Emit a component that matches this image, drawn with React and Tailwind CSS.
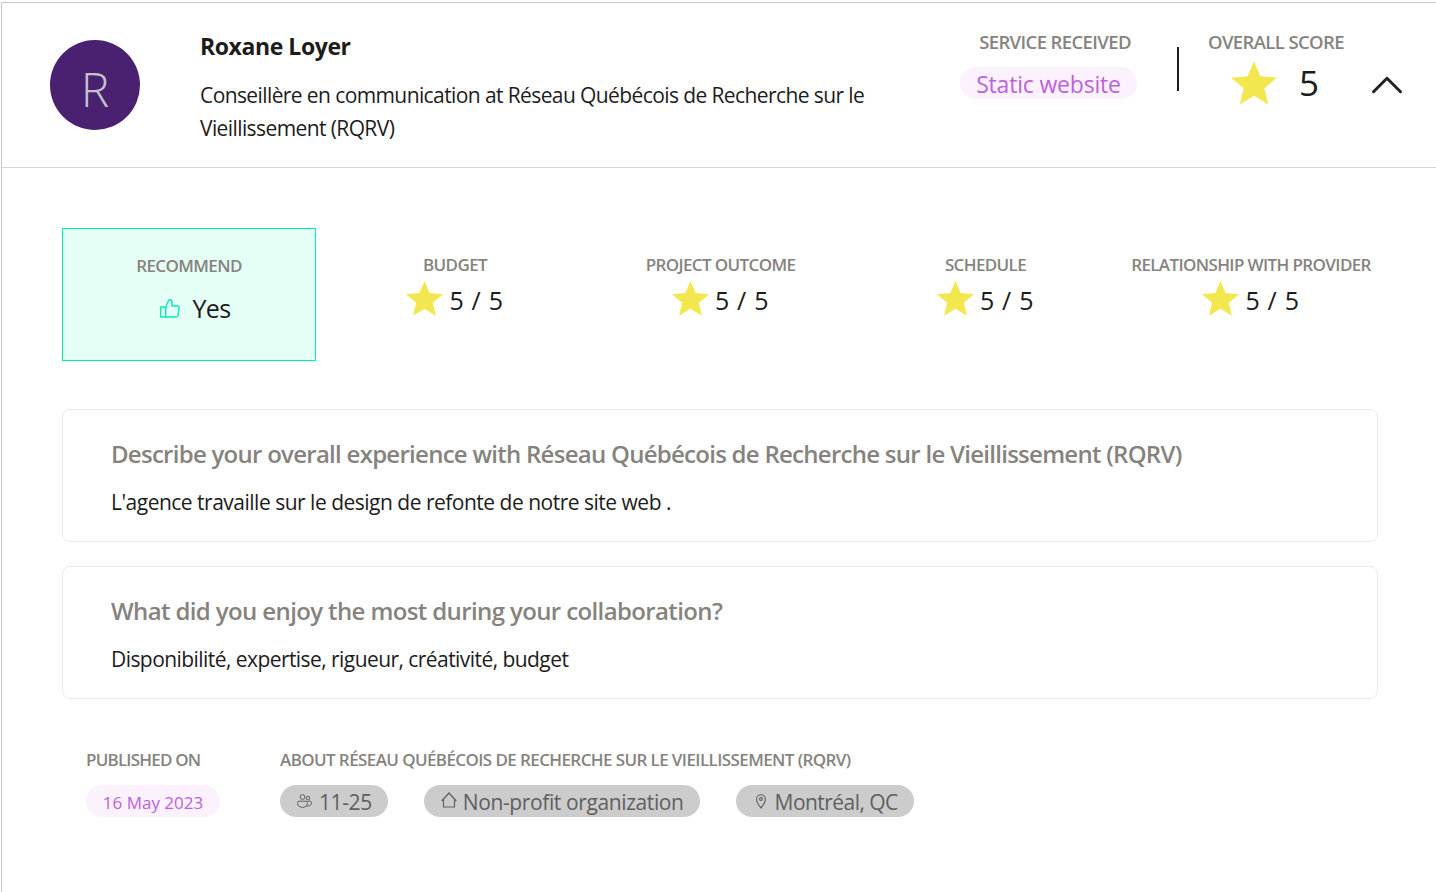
import React from "react";
import { ChevronUp } from "lucide-react";

const Star = ({ className }) => (
  <svg viewBox="0 0 24 24" className={className}>
    <path
      fill="#f2e74e"
      d="M12 .6l3.300 7.900 8.700.7-6.600 5.600 2 8.400L12 18.700l-7.400 4.500 2-8.400L0 9.200l8.700-.7z"
    />
  </svg>
);

const ThumbIcon = () => (
  <svg viewBox="0 0 20 19" className="w-[20px] h-[19px]" fill="none" stroke="#00f0b0" strokeWidth="1.4" strokeLinejoin="round">
    <rect x=".7" y="8" width="5" height="10" />
    <path d="M5.700 8L8.500 1.500Q9 .7 10 .7 12 .7 12 3V7H18Q19.300 7 19.100 8.500L18 16.500Q17.800 18 16.500 18H5.700" />
  </svg>
);

const UsersIcon = () => (
  <svg viewBox="0 0 15 14" className="w-[15px] h-[14px] mr-[7px]" fill="none" stroke="#5f5f5f" strokeWidth="1">
    <circle cx="5.500" cy="3" r="2.400" />
    <circle cx="11" cy="4" r="1.800" />
    <path d="M.6 8.500A1.300 1.300 0 0 1 1.900 7.200H9.100A1.300 1.300 0 0 1 10.400 8.500V9.500C10.400 11.800 8.300 13.400 5.500 13.400S.6 11.800.6 9.500Z" />
    <path d="M10.300 7.200H13.200A1.200 1.200 0 0 1 14.400 8.400V9C14.400 10.900 12.800 12 10.800 12 10 12 9.500 11.900 9 11.700" />
  </svg>
);

const HomeIcon = () => (
  <svg viewBox="0 0 16 16" className="w-[16px] h-[16px] mr-[6px] -mt-[2px]" fill="none" stroke="#5f5f5f" strokeWidth="1.2">
    <path d="M.7 9L8 1 15.300 9M2.500 7.500V15H13.500V7.500" />
  </svg>
);

const PinIcon = () => (
  <svg viewBox="0 0 10 15" className="w-[10px] h-[15px] mr-[9px] ml-[3px]" fill="none" stroke="#5f5f5f" strokeWidth="1.1">
    <path d="M5 14C3 11.500.6 9 .6 5.200A4.400 4.400 0 0 1 9.400 5.200C9.400 9 7 11.500 5 14Z" />
    <circle cx="5" cy="5" r="1.400" />
  </svg>
);

const Label = ({ children, className = "text-[17px] tracking-[-0.62px]" }) => (
  <div className={`leading-[24px] font-semibold text-[#86837f] uppercase whitespace-nowrap ${className}`}>
    {children}
  </div>
);

const Rating = ({ label, className }) => (
  <div className={`flex flex-col items-center pt-[25px] ${className}`}>
    <Label>{label}</Label>
    <div className="flex items-center gap-[6px] mt-[1px] h-[40px]">
      <Star className="w-[37px] h-[37px]" />
      <span className="mt-[6px] text-[25px] tracking-[0.7px] text-[#1c1c1c]">5 / 5</span>
    </div>
  </div>
);

const Card = ({ title, text, className = "", titleTracking = "tracking-[-0.62px]", textTracking = "tracking-[-0.5px]" }) => (
  <div className={`border border-[#ebebeb] rounded-[8px] pl-[48px] h-[133px] pt-[26px] ${className}`}>
    <h3 className={`text-[24px] leading-[36px] font-semibold text-[#86837f] ${titleTracking}`}>{title}</h3>
    <p className={`mt-[14px] text-[21px] leading-[32px] text-[#1c1c1c] ${textTracking}`}>{text}</p>
  </div>
);

const Chip = ({ icon, children, tracking = "tracking-[-0.39px]" }) => (
  <div className={`h-[32px] pl-[17px] pr-[16px] rounded-full bg-[#cccccc] text-[#5f5f5f] text-[21px] flex items-center whitespace-nowrap ${tracking}`}>
    {icon}
    <span className="mt-[4px]">{children}</span>
  </div>
);

export default function App() {
  return (
    <div className="h-[892px] bg-white overflow-hidden pt-[2px] pl-[1px] text-[#1c1c1c] font-['Open_Sans',sans-serif]">
      <div className="border-l border-t border-[#c9c9c9] h-[890px]">
        <header className="flex border-b border-[#d6d6d6] h-[165px]">
          <div className="ml-[48px] mt-[37px] pt-[7px] w-[90px] h-[90px] rounded-full bg-[#4a2070] text-[#c4c0cc] flex items-center justify-center text-[48px] font-light shrink-0">
            R
          </div>
          <div className="ml-[60px] w-[700px] pt-[26px]">
            <h2 className="text-[23px] leading-[34px] font-bold tracking-[-0.42px] text-[#1c1c1c]">Roxane Loyer</h2>
            <p className="mt-[16px] text-[21px] leading-[33px] tracking-[-0.6px] text-[#1c1c1c]">
              Conseillère en communication at Réseau Québécois de Recherche sur le Vieillissement (RQRV)
            </p>
          </div>
          <div className="ml-[60px] w-[177px] pt-[27px] flex flex-col items-center">
            <Label className="ml-[13px] text-[18.500px] tracking-[-0.62px]">Service received</Label>
            <div className="mt-[13px] h-[32px] pt-[2px] px-[16px] rounded-full bg-[#fbf2fe] text-[#bd60de] text-[23px] tracking-[-0.19px] flex items-center whitespace-nowrap">
              Static website
            </div>
          </div>
          <div className="ml-[40px] mt-[44px] w-[2px] h-[44px] bg-[#1c1c1c]" />
          <div className="ml-[29px] pt-[27px] w-[140px]">
            <Label className="text-[18.500px] tracking-[-0.62px]">Overall score</Label>
            <div className="flex items-center mt-[3px] ml-[23px]">
              <Star className="w-[46px] h-[46px]" />
              <span className="ml-[22px] text-[35px] text-[#1c1c1c]">5</span>
            </div>
          </div>
          <ChevronUp className="mt-[55px] ml-[12px] w-[54px] h-[54px] shrink-0 text-[#222222]" strokeWidth={1.3} />
        </header>

        <main className="pl-[60px] pr-[58px]">
          <section className="flex mt-[60px] h-[133px]">
            <div className="w-[254px] h-[133px] border border-[#00f0b0] bg-[#e5fff6] flex flex-col items-center pt-[25px]">
              <Label>Recommend</Label>
              <div className="flex items-center mt-[12px] ml-[12px] gap-[13px]">
                <ThumbIcon />
                <span className="text-[25px] tracking-[-0.7px] leading-[36px]">Yes</span>
              </div>
            </div>
            <Rating label="Budget" className="w-[278px]" />
            <Rating label="Project outcome" className="w-[253px]" />
            <Rating label="Schedule" className="w-[277px]" />
            <Rating label="Relationship with provider" className="w-[254px]" />
          </section>

          <Card
            className="mt-[48px]"
            titleTracking="tracking-[-0.73px]"
            title="Describe your overall experience with Réseau Québécois de Recherche sur le Vieillissement (RQRV)"
            text="L'agence travaille sur le design de refonte de notre site web ."
          />
          <Card
            className="mt-[24px]"
            textTracking="tracking-[-0.56px]"
            title="What did you enjoy the most during your collaboration?"
            text="Disponibilité, expertise, rigueur, créativité, budget"
          />

          <section className="flex mt-[49px] pl-[24px]">
            <div className="w-[194px]">
              <Label className="text-[17px] tracking-[-0.8px]">Published on</Label>
              <div className="mt-[13px] w-[134px] h-[32px] pt-[3px] rounded-full bg-[#fbf2fe] text-[#bd60de] text-[17px] flex items-center justify-center whitespace-nowrap">
                16 May 2023
              </div>
            </div>
            <div>
              <Label className="text-[17px] tracking-[-0.6px]">About Réseau Québécois de Recherche sur le Vieillissement (RQRV)</Label>
              <div className="mt-[13px] flex gap-[36px]">
                <Chip icon={<UsersIcon />}>11-25</Chip>
                <Chip icon={<HomeIcon />}>Non-profit organization</Chip>
                <Chip icon={<PinIcon />} tracking="tracking-[-0.55px]">Montréal, QC</Chip>
              </div>
            </div>
          </section>
        </main>
      </div>
    </div>
  );
}
